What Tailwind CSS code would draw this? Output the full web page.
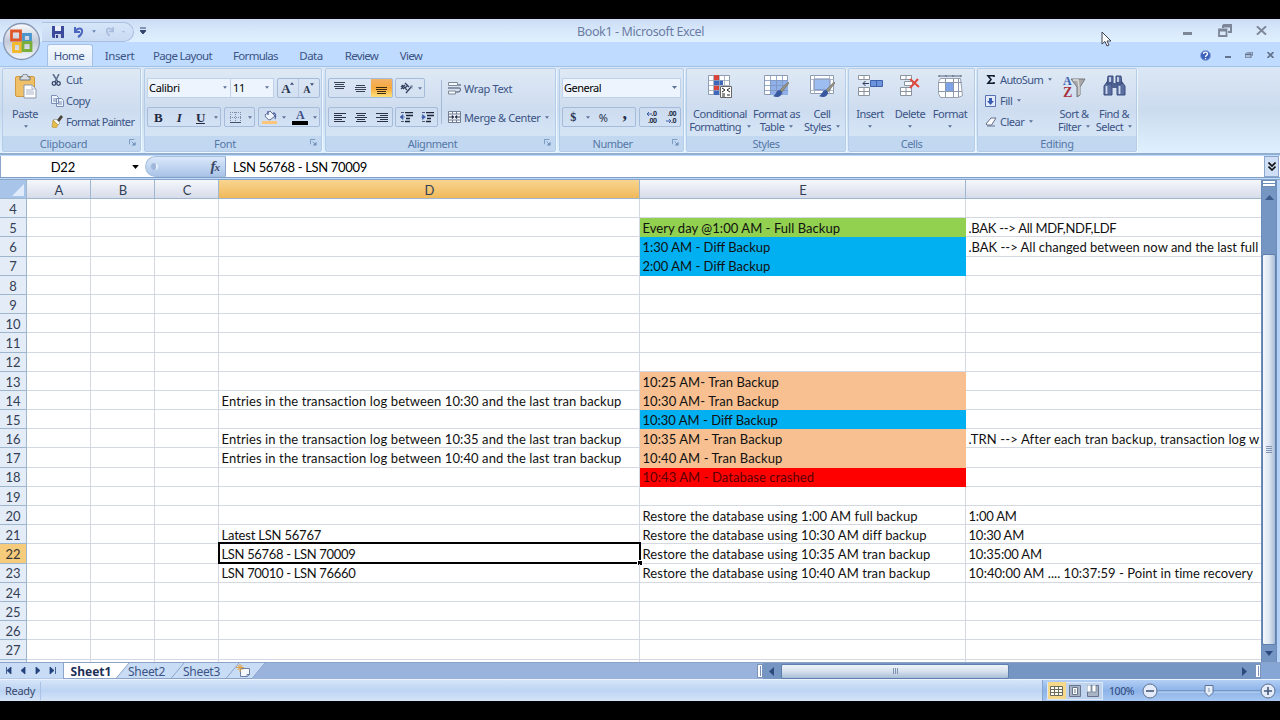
<!DOCTYPE html>
<html lang="en">
<head>
    <meta charset="UTF-8">
    <meta name="viewport" content="width=device-width, initial-scale=1.0">
    <title>Book1 - Microsoft Excel</title>
    <script src="https://cdn.jsdelivr.net/npm/@tailwindcss/browser@4"></script>
</head>
<body class="bg-black w-[1280px] h-[720px] overflow-hidden pt-[19px] font-['Noto_Sans',sans-serif] text-[11px] leading-none text-[#3b5485] whitespace-nowrap">
    <!-- shared glyphs -->
    <svg class="hidden">
        <symbol id="caret" viewBox="0 0 5 3"><path d="M0 0h5L2.5 3z" fill="currentColor"/></symbol>
        <symbol id="launcher" viewBox="0 0 8 8"><path d="M.5 6V.5H6M3 3l3 3" fill="none" stroke="#6d8fb8"/><path d="M7.5 3v4.500H3z" fill="#6d8fb8"/></symbol>
        <symbol id="brush" viewBox="0 0 17 17"><path d="M16 1 8 9l2 2 7-9z" fill="#9a9482" stroke="#6b6b62" stroke-width=".6"/><path d="M8 9c-4 0-3 4-7 6 4 2 9 1 9-4z" fill="#38589f"/></symbol>
    </svg>

    <div class="relative h-[682px] w-[1280px] bg-[#bfdbff] flex flex-col">
        <!-- title bar -->
        <div class="h-[23px] shrink-0 flex items-center bg-gradient-to-b from-[#cbdcf4] via-[#d8e8fb] to-[#dff0ff] relative">
            <div class="ml-[42px] w-[92px] h-[20px] rounded-r-full border border-[#a9c0e0] border-l-0 bg-gradient-to-b from-[#d6e5f8] to-[#c9dbf3] flex items-center pl-[10px] mt-0.5">
                <svg class="w-[12px] h-[12px]" viewBox="0 0 12 12"><path d="M0 0h12v12H1L0 11z" fill="#3c4a9c"/><path d="M3 0h6v5H3z" fill="#e9eefa"/><path d="M3 8h6v4H3z" fill="#c9d1ea"/><path d="M4 9h2v3H4z" fill="#343f86"/></svg>
                <svg class="w-[11px] h-[12px] ml-[9px]" viewBox="0 0 11 12"><path d="M2 1v5h5M2.500 5.500C5 1 10 2 9 6c-.4 2-2 4-4 5" fill="none" stroke="#4a66bd" stroke-width="2"/></svg>
                <svg class="w-[4px] h-[3px] ml-[8px] text-[#6a83b0]"><use href="#caret"/></svg>
                <svg class="w-[10px] h-[11px] ml-[9px]" viewBox="0 0 11 12"><path d="M9 1v5H4M8.500 5.500C6 1 1 2 2 6c.4 2 2 4 3 5" fill="none" stroke="#a9bcdc" stroke-width="1.800"/></svg>
                <svg class="w-[3px] h-[2px] ml-[7px] text-[#a9bcdc]"><use href="#caret"/></svg>
            </div>
            <svg class="w-[6px] h-[8px] ml-[6px] mt-px" viewBox="0 0 6 8"><path d="M0 1h6M0 3.500h6L3 7z" stroke="#32456e" stroke-width="1" fill="#32456e"/></svg>
            <span class="absolute left-[577px] top-[7px] text-[12.5px] tracking-[-0.38px] text-[#6b7ca3]">Book1 - Microsoft Excel</span>
            <div class="ml-auto flex items-center pr-[13px] text-[#7b8899]">
                <svg class="w-[10px] h-[4px] mr-[25px] mt-[7px]"><path d="M0 0h9v3H0z" fill="#7d8797"/></svg>
                <svg class="w-[14px] h-[13px] mr-[24px]" viewBox="0 0 14 13"><path d="M5 1h8v7h-3M5 2.500h8M5 1v3" fill="none" stroke="#7d8797" stroke-width="2"/><path d="M1 5.500h7.500V12H1zM1 6.500h7.500" fill="none" stroke="#7d8797" stroke-width="1.800"/></svg>
                <svg class="w-[11px] h-[9px]" viewBox="0 0 12 9"><path d="M1 0l10 9M11 0L1 9" stroke="#7d8797" stroke-width="2.200"/></svg>
            </div>
        </div>

        <!-- ribbon tabs -->
        <div class="h-[24px] shrink-0 flex items-end bg-[#bfdbff] text-[11.5px] tracking-[-0.7px] text-[#3b5485]">
            <div class="ml-[47px] w-[46px] h-[22px] rounded-t-[3px] border border-b-0 border-[#a3c0e8] bg-gradient-to-b from-[#f4f9ff] to-[#e0ebf8] flex items-center justify-center pr-0.5 tracking-[-0.6px]">Home</div>
            <div class="h-[22px] w-[53px] flex items-center justify-center pt-0.5 tracking-[-0.4px]">Insert</div>
            <div class="h-[22px] w-[73px] flex items-center justify-center pt-0.5">Page Layout</div>
            <div class="h-[22px] w-[73px] flex items-center justify-center pt-0.5">Formulas</div>
            <div class="h-[22px] w-[38px] flex items-center justify-center pt-0.5 tracking-[-0.5px]">Data</div>
            <div class="h-[22px] w-[63px] flex items-center justify-center pt-0.5">Review</div>
            <div class="h-[22px] w-[36px] flex items-center justify-center pt-0.5">View</div>
            <div class="ml-auto h-[22px] flex items-center pr-[6px]">
                <svg class="w-[11px] h-[11px] mr-[14px]" viewBox="0 0 11 11"><circle cx="5.500" cy="5.500" r="5" fill="#3d62bd" stroke="#8ba6de"/><path d="M3.500 4c0-2.500 4-2.500 4 0 0 1.300-2 1.500-2 3M5.500 8v1.200" fill="none" stroke="#fff" stroke-width="1.300"/></svg>
                <svg class="w-[6px] h-[2px] mr-[14px] mt-1"><path d="M0 0h6v2H0z" fill="#63738d"/></svg>
                <svg class="w-[8px] h-[6px] mr-[14px]" viewBox="0 0 8 6"><path d="M1.500 0H8v3H6.500M0 2h6v4H0zM0 2.500h6" fill="#a9bcd8" stroke="#63738d"/></svg>
                <svg class="w-[7px] h-[6px]" viewBox="0 0 7 6"><path d="M.5 0l6 6M6.500 0l-6 6" stroke="#63738d" stroke-width="1.600"/></svg>
            </div>
        </div>

        <!-- ribbon -->
        <div class="h-[89px] shrink-0 border-t border-[#9fc2e8] bg-gradient-to-b from-[#dbe7f5] via-[#cbdbee] to-[#dff1ff] border-b-2 border-b-[#93afd0] pt-px pl-[2px] flex gap-[3px] tracking-[-0.5px]">

            <!-- Clipboard -->
            <div class="w-[139px] h-[84px] border border-[#b3cce8] shadow-[1px_1px_0_#eef6ff] rounded-[2px] bg-gradient-to-b from-[#dfe9f5] via-[#cddcef] to-[#dbeafa] flex flex-col">
                <div class="h-[67px] flex">
                    <div class="w-[46px] flex flex-col items-center pt-[5px]">
                        <svg class="w-[22px] h-[25px]" viewBox="0 0 22 25"><rect x=".5" y="2.500" width="19" height="20" rx="1.500" fill="#efc066" stroke="#d29a3e"/><path d="M5 3h2c0-4 6-4 6 0h2v3H5z" fill="#d8dce3" stroke="#6f7683"/><path d="M9 11h8l4 4v9H9z" fill="#fff" stroke="#8d99ad"/><path d="M17 11v4h4M11 16h7M11 18h8M11 20h8" fill="none" stroke="#a9b4c7"/></svg>
                        <span class="mt-[9px] pr-0.5 tracking-[-0.5px]">Paste</span>
                        <svg class="w-[4px] h-[3px] mt-[6px] text-[#5b7096]"><use href="#caret"/></svg>
                    </div>
                    <div class="flex flex-col -ml-px">
                        <div class="h-[21px] flex items-center"><svg class="w-[16px] h-[12px]" viewBox="0 0 16 12"><path d="M5 0l5 8M11 0L7 8" stroke="#5c6c8a" stroke-width="1.500"/><circle cx="6" cy="9.500" r="1.800" fill="none" stroke="#344468" stroke-width="1.300"/><circle cx="10.500" cy="9.500" r="1.800" fill="none" stroke="#344468" stroke-width="1.300"/></svg><span class="ml-[2px]">Cut</span></div>
                        <div class="h-[21px] flex items-center"><svg class="w-[16px] h-[12px]" viewBox="0 0 16 12"><path d="M3.500.5h5l2 2v6h-7zM8.500 3.500h5l2 2v6h-7z" fill="#eef4fd" stroke="#7a8db5"/><path d="M5 4h3M5 6h3M10 7h4M10 9h4" stroke="#7a8db5"/></svg><span class="ml-[2px]">Copy</span></div>
                        <div class="h-[21px] flex items-center"><svg class="w-[16px] h-[13px]" viewBox="0 0 16 13"><path d="M9 5l4-5 2 2-4 5z" fill="#4a4438"/><path d="M5 5l3-1 4 4-2 2z" fill="#f5f5f5" stroke="#8d8d80" stroke-width=".7"/><path d="M5 5l5 5-2 3-4-1z" fill="#e5bd4c" stroke="#b98d2d" stroke-width=".6"/></svg><span class="ml-[2px] tracking-[-0.65px]">Format Painter</span></div>
                    </div>
                </div>
                <div class="h-[15px] bg-[#c2d8f0] text-[#5577a8] relative flex items-center justify-center pr-[16px] tracking-[-0.3px]">Clipboard<svg class="absolute right-[4px] top-[3px] w-[7px] h-[7px]"><use href="#launcher"/></svg></div>
            </div>

            <!-- Font -->
            <div class="w-[178px] h-[84px] border border-[#b3cce8] shadow-[1px_1px_0_#eef6ff] rounded-[2px] bg-gradient-to-b from-[#dfe9f5] via-[#cddcef] to-[#dbeafa] flex flex-col">
                <div class="h-[67px] pt-[9px] pl-[2px] flex flex-col gap-[9px]">
                    <div class="h-[20px] flex text-black tracking-[-0.3px]">
                        <div class="w-[84px] bg-[#edf4fd] border border-[#bfd2ea] flex items-center justify-between pl-[1px] pr-[3px] pb-0.5">Calibri<svg class="w-[4px] h-[3px] text-[#5b7096]"><use href="#caret"/></svg></div>
                        <div class="w-[43px] bg-[#edf4fd] border border-l-0 border-[#bfd2ea] flex items-center justify-between pl-[2px] pr-[4px] pb-0.5">11<svg class="w-[4px] h-[3px] text-[#5b7096]"><use href="#caret"/></svg></div>
                        <div class="ml-[3px] w-[43px] border border-[#a5bbda] rounded-[2px] flex font-['Liberation_Serif',serif] font-bold text-[#29344d]">
                            <div class="w-[21px] border-r border-[#b8cbe4] flex items-center justify-center text-[13px]">A<svg class="w-[4px] h-[3px] -mt-[9px]" viewBox="0 0 5 3"><path d="M0 3h5L2.500 0z" fill="#3c4c70"/></svg></div>
                            <div class="w-[21px] flex items-center justify-center text-[10px] pt-1">A<svg class="w-[4px] h-[3px] -mt-[12px] text-[#3c4c70]"><use href="#caret"/></svg></div>
                        </div>
                    </div>
                    <div class="h-[20px] flex text-[#1f2940]">
                        <div class="w-[74px] border border-[#a5bbda] rounded-[2px] flex items-center font-['Liberation_Serif',serif] font-bold text-[13px]">
                            <span class="w-[20px] text-center">B</span><span class="w-[22px] text-center italic">I</span><span class="w-[21px] text-center underline">U</span><svg class="w-[4px] h-[3px] ml-[3px] text-[#5b7096]"><use href="#caret"/></svg>
                        </div>
                        <div class="ml-[3px] w-[31px] border border-[#a5bbda] rounded-[2px] flex items-center pl-[5px]">
                            <svg class="w-[11px] h-[11px]" viewBox="0 0 11 11"><path d="M.5 0v10M5.500 0v10M10.500 0v10M0 .5h11M0 5.500h11" stroke="#8090ab" stroke-dasharray="1 1"/><path d="M0 10.500h11" stroke="#44506a"/></svg>
                            <svg class="w-[4px] h-[3px] ml-[7px] text-[#5b7096]"><use href="#caret"/></svg>
                        </div>
                        <div class="ml-[3px] w-[62px] border border-[#a5bbda] rounded-[2px] flex items-center pl-[3px]">
                            <svg class="w-[15px] h-[14px]" viewBox="0 0 15 14"><path d="M3 5l5-4 5 5-5 4c-2 0-5-3-5-5z" fill="#eef2fa" stroke="#5f7095"/><path d="M6 5V1M11 3c3 0 3 3 2 6" fill="none" stroke="#5065a0" stroke-width="1.300"/><path d="M0 11h15v3H0z" fill="#fbc57c"/></svg>
                            <svg class="w-[4px] h-[3px] ml-[5px] text-[#5b7096]"><use href="#caret"/></svg>
                            <div class="ml-[6px] w-[16px] border-b-4 border-black text-center font-['Liberation_Serif',serif] font-bold text-[12px] leading-[11px] text-[#3c4f86]">A</div>
                            <svg class="w-[4px] h-[3px] ml-[5px] text-[#5b7096]"><use href="#caret"/></svg>
                        </div>
                    </div>
                </div>
                <div class="h-[15px] bg-[#c2d8f0] text-[#5577a8] relative flex items-center justify-center pr-[16px] tracking-[-0.3px]">Font<svg class="absolute right-[4px] top-[3px] w-[7px] h-[7px]"><use href="#launcher"/></svg></div>
            </div>

            <!-- Alignment -->
            <div class="w-[231px] h-[84px] border border-[#b3cce8] shadow-[1px_1px_0_#eef6ff] rounded-[2px] bg-gradient-to-b from-[#dfe9f5] via-[#cddcef] to-[#dbeafa] flex flex-col">
                <div class="h-[67px] flex">
                    <div class="pt-[9px] pl-[2px] flex flex-col gap-[9px]">
                        <div class="h-[20px] flex">
                            <div class="w-[65px] border border-[#a5bbda] rounded-[2px] flex">
                                <div class="w-[21px] flex justify-center pt-[3px]"><svg class="w-[11px] h-[7px]"><path d="M0 .5h11M1 2.500h9M0 4.500h11M1 6.500h9" stroke="#3a4356"/></svg></div>
                                <div class="w-[21px] flex justify-center pt-[6px]"><svg class="w-[11px] h-[7px]"><path d="M1 .5h9M0 2.500h11M0 4.500h11M1 6.500h9" stroke="#3a4356"/></svg></div>
                                <div class="w-[21px] flex justify-center pt-[8px] bg-gradient-to-b from-[#f3b265] via-[#f7a93c] to-[#ffe078]"><svg class="w-[11px] h-[7px]"><path d="M0 .5h11M0 2.500h11M1 4.500h9M1 6.500h9" stroke="#3a2b10"/></svg></div>
                            </div>
                            <div class="ml-[2px] w-[30px] border border-[#a5bbda] rounded-[2px] flex items-center pl-[4px]">
                                <svg class="w-[13px] h-[12px]" viewBox="0 0 13 12"><path d="M1 7l4-4M2 3l5 5M5 1l4 4M1 4l3 3M5 6l3-3M6 11l6-7" fill="none" stroke="#34415e" stroke-width="1.300"/><path d="M12.500 3v4l-3-3z" fill="#8593ae"/></svg>
                                <svg class="w-[4px] h-[3px] ml-[5px] text-[#5b7096]"><use href="#caret"/></svg>
                            </div>
                        </div>
                        <div class="h-[20px] flex">
                            <div class="w-[65px] border border-[#a5bbda] rounded-[2px] flex items-center">
                                <div class="w-[21px] flex justify-center"><svg class="w-[12px] h-[9px]"><path d="M0 .5h12M0 2.500h8M0 4.500h12M0 6.500h8M0 8.500h11" stroke="#2a3347"/></svg></div>
                                <div class="w-[21px] flex justify-center"><svg class="w-[12px] h-[9px]"><path d="M1 .5h10M2 2.500h8M0 4.500h12M2 6.500h8M1 8.500h10" stroke="#2a3347"/></svg></div>
                                <div class="w-[21px] flex justify-center"><svg class="w-[12px] h-[9px]"><path d="M0 .5h12M4 2.500h8M0 4.500h12M4 6.500h8M1 8.500h11" stroke="#2a3347"/></svg></div>
                            </div>
                            <div class="ml-[2px] w-[43px] border border-[#a5bbda] rounded-[2px] flex items-center">
                                <div class="w-[21px] flex justify-center"><svg class="w-[13px] h-[11px]"><path d="M5 .5h8M6 3.500h7M6 6.500h4M5 9.500h5" stroke="#1c2538" stroke-width="1.300"/><path d="M1 .5h3M1 9.500h3" stroke="#4a5878"/><path d="M0 5l3-2.500v5zM3 5h2" fill="#3c5ba8" stroke="#3c5ba8" stroke-width=".6"/></svg></div>
                                <div class="w-[20px] flex justify-center"><svg class="w-[13px] h-[11px]"><path d="M5 .5h8M6 3.500h7M6 6.500h4M5 9.500h5" stroke="#1c2538" stroke-width="1.300"/><path d="M1 .5h3M1 9.500h3" stroke="#4a5878"/><path d="M4.500 5l-3-2.500v5zM0 5h2" fill="#3c5ba8" stroke="#3c5ba8" stroke-width=".6"/></svg></div>
                            </div>
                        </div>
                    </div>
                    <div class="mt-[11px] ml-[3px] h-[44px] w-px bg-[#a3b9d6]"></div>
                    <div class="flex flex-col pt-[9px] gap-[9px] pl-[6px]">
                        <div class="h-[20px] flex items-center"><svg class="w-[13px] h-[13px]" viewBox="0 0 13 13"><path d="M.5.500h9v3h-9zM.5 9h7v3h-7z" fill="#f6f9fd" stroke="#7f8998"/><path d="M0 6h11c2 0 2 4-1 4H8M10 3h3" fill="none" stroke="#707b8f" stroke-width="1.300"/></svg><span class="ml-[3px] tracking-[-0.35px]">Wrap Text</span></div>
                        <div class="h-[20px] flex items-center"><svg class="w-[13px] h-[12px]" viewBox="0 0 13 12"><path d="M.5.500h12v11H.5zM4.500 0v3M8.500 0v3M4.500 9v3M8.500 9v3M0 3h13M0 9h13" fill="#f6f9fd" stroke="#727e93"/><path d="M1 6h4M8 6h4M4 4.500 5.500 6 4 7.500M9 4.500 7.500 6 9 7.500" fill="none" stroke="#26324c" stroke-width="1.200"/></svg><span class="ml-[3px] tracking-[-0.4px]">Merge &amp; Center</span><svg class="w-[4px] h-[3px] ml-[5px] text-[#5b7096]"><use href="#caret"/></svg></div>
                    </div>
                </div>
                <div class="h-[15px] bg-[#c2d8f0] text-[#5577a8] relative flex items-center justify-center pr-[16px] tracking-[-0.45px]">Alignment<svg class="absolute right-[4px] top-[3px] w-[7px] h-[7px]"><use href="#launcher"/></svg></div>
            </div>

            <!-- Number -->
            <div class="w-[125px] h-[84px] border border-[#b3cce8] shadow-[1px_1px_0_#eef6ff] rounded-[2px] bg-gradient-to-b from-[#dfe9f5] via-[#cddcef] to-[#dbeafa] flex flex-col">
                <div class="h-[67px] pt-[9px] pl-[2px] flex flex-col gap-[9px]">
                    <div class="w-[119px] h-[20px] bg-[#edf4fd] border border-[#bfd2ea] flex items-center justify-between pl-[1px] pr-[3px] pb-0.5 text-black tracking-[-0.5px]">General<svg class="w-[5px] h-[3px] text-[#5b7096]"><use href="#caret"/></svg></div>
                    <div class="h-[20px] flex text-[#26324c]">
                        <div class="w-[74px] border border-[#a5bbda] rounded-[2px] flex items-center">
                            <span class="w-[20px] text-center font-['Liberation_Serif',serif] font-bold text-[12px]">$</span><svg class="w-[4px] h-[3px] ml-[3px] text-[#5b7096]"><use href="#caret"/></svg><span class="w-[26px] text-center text-[11px]">%</span><span class="w-[17px] text-center font-['Liberation_Serif',serif] font-bold text-[18px] -mt-[9px]">,</span>
                        </div>
                        <div class="ml-[3px] w-[42px] border border-[#a5bbda] rounded-[2px] flex items-center font-bold text-[7px] leading-[7px]">
                            <div class="w-[21px] flex flex-col items-end pr-[4px]"><div class="flex items-center"><svg class="w-[5px] h-[4px]" viewBox="0 0 5 4"><path d="M2 0 0 2l2 2M0 2h5" fill="none" stroke="#3c5ba8"/></svg>.0</div><div>.00</div></div>
                            <div class="w-[20px] flex flex-col items-end pr-[4px]"><div>.00</div><div class="flex items-center"><svg class="w-[5px] h-[4px]" viewBox="0 0 5 4"><path d="M3 0l2 2-2 2M0 2h5" fill="none" stroke="#3c5ba8"/></svg>.0</div></div>
                        </div>
                    </div>
                </div>
                <div class="h-[15px] bg-[#c2d8f0] text-[#5577a8] relative flex items-center justify-center pr-[18px] tracking-[-0.5px]">Number<svg class="absolute right-[4px] top-[3px] w-[7px] h-[7px]"><use href="#launcher"/></svg></div>
            </div>

            <!-- Styles -->
            <div class="w-[160px] h-[84px] -ml-px border border-[#b3cce8] shadow-[1px_1px_0_#eef6ff] rounded-[2px] bg-gradient-to-b from-[#dfe9f5] via-[#cddcef] to-[#dbeafa] flex flex-col">
                <div class="h-[67px] flex pt-[6px] pl-[3px]">
                    <div class="w-[60px] flex flex-col items-center">
                        <svg class="w-[24px] h-[24px]" viewBox="0 0 24 24"><path d="M.5.500h21v19H.5z" fill="#fff" stroke="#8e9bb3"/><path d="M6 0h5v5H6zM6 10h5v5H6z" fill="#d9433c"/><path d="M6 5h9v5H6zM6 15h5v5H6z" fill="#3f66bd"/><path d="M0 5.500h22M0 10.500h22M0 15.500h22M5.500 0v20M11.500 0v20M16.500 0v20" stroke="#97a3b8" stroke-width=".8"/><path d="M12.500 11.500h11v11h-11z" fill="#fff" stroke="#666"/><path d="M14 13l3 2-3 2M22 13l-3 2 3 2M14 19h3M14 21h3M19 20h3" fill="none" stroke="#222"/></svg>
                        <span class="mt-[9px]">Conditional</span>
                        <span class="mt-[2px] flex items-center tracking-[-0.6px]">Formatting<svg class="w-[4px] h-[3px] ml-[6px] text-[#5b7096]"><use href="#caret"/></svg></span>
                    </div>
                    <div class="w-[53px] flex flex-col items-center">
                        <svg class="w-[25px] h-[24px]" viewBox="0 0 25 24"><path d="M.5.500h23v19H.5z" fill="#fff" stroke="#8e9bb3"/><path d="M6 5h18v15H6z" fill="#8fb0e8"/><path d="M0 5.500h24M0 10.500h24M0 15.500h24M6.500 0v20M12.500 0v20M18.500 0v20" stroke="#7f94bd" stroke-width=".8"/><use href="#brush" x="8" y="6" width="17" height="17"/></svg>
                        <span class="mt-[9px]">Format as</span>
                        <span class="mt-[2px] flex items-center">Table<svg class="w-[4px] h-[3px] ml-[5px] text-[#5b7096]"><use href="#caret"/></svg></span>
                    </div>
                    <div class="w-[38px] flex flex-col items-center">
                        <svg class="w-[25px] h-[24px]" viewBox="0 0 25 24"><path d="M.5.500h23v18H.5z" fill="#fff" stroke="#8e9bb3"/><path d="M4 4h16v11H4z" fill="#9dbcf0" stroke="#6783b8"/><path d="M4.500 0v19M19.500 0v19M0 4.500h24M0 15.500h24" stroke="#9aa7bd" stroke-width=".8"/><use href="#brush" x="8" y="6" width="17" height="17"/></svg>
                        <span class="mt-[9px]">Cell</span>
                        <span class="mt-[2px] flex items-center">Styles<svg class="w-[4px] h-[3px] ml-[5px] text-[#5b7096]"><use href="#caret"/></svg></span>
                    </div>
                </div>
                <div class="h-[15px] bg-[#c2d8f0] text-[#5577a8] flex items-center justify-center tracking-[-0.5px]">Styles</div>
            </div>

            <!-- Cells -->
            <div class="w-[127px] h-[84px] -ml-px border border-[#b3cce8] shadow-[1px_1px_0_#eef6ff] rounded-[2px] bg-gradient-to-b from-[#dfe9f5] via-[#cddcef] to-[#dbeafa] flex flex-col">
                <div class="h-[67px] flex pt-[6px] pl-[1px] tracking-[-0.5px]">
                    <div class="w-[40px] flex flex-col items-center">
                        <svg class="w-[25px] h-[22px]" viewBox="0 0 25 22"><path d="M.5.500h11v4H.5zM.5 12.500h11v8H.5zM6 0v5M6 12v9M0 16.500h12" fill="#fff" stroke="#8b939f"/><path d="M12.500 5.500h12v6h-12zM18.500 5v7" fill="#6d93dd" stroke="#3e62ab"/><path d="M5 8.500h6M7.500 6 5 8.500 7.500 11" fill="none" stroke="#2d3c5a"/></svg>
                        <span class="mt-[11px]">Insert</span>
                        <svg class="w-[4px] h-[3px] mt-[6px] text-[#5b7096]"><use href="#caret"/></svg>
                    </div>
                    <div class="w-[40px] flex flex-col items-center">
                        <svg class="w-[20px] h-[22px]" viewBox="0 0 20 22"><path d="M.5.500h11v4H.5zM.5 12.500h11v8H.5zM6 0v5M6 12v9M0 16.500h12M4.500 6.500h8v4h-8z" fill="#fff" stroke="#8b939f"/><path d="M10 4l9 8M18 4l-8 9" stroke="#e0483e" stroke-width="2"/></svg>
                        <span class="mt-[11px]">Delete</span>
                        <svg class="w-[4px] h-[3px] mt-[6px] text-[#5b7096]"><use href="#caret"/></svg>
                    </div>
                    <div class="w-[40px] flex flex-col items-center">
                        <svg class="w-[25px] h-[23px]" viewBox="0 0 25 23"><path d="M2.500 3.500h20l2 17-4 2H2.500l-2-4v-12z" fill="#fff" stroke="#97a0ae"/><path d="M7 7h8v10H7z" fill="#7ea3e6"/><path d="M1 7.500h23M1 16.500h23M7.500 3v19M15.500 3v19M20.500 3v19" stroke="#8b97ab"/><path d="M1 1h22M1 0v2M8 0v2M15 0v2M23 0v2" stroke="#59657c"/></svg>
                        <span class="mt-[10px]">Format</span>
                        <svg class="w-[4px] h-[3px] mt-[6px] text-[#5b7096]"><use href="#caret"/></svg>
                    </div>
                </div>
                <div class="h-[15px] bg-[#c2d8f0] text-[#5577a8] flex items-center justify-center tracking-[-0.5px]">Cells</div>
            </div>

            <!-- Editing -->
            <div class="w-[160px] h-[84px] -ml-px border border-[#b3cce8] shadow-[1px_1px_0_#eef6ff] rounded-[2px] bg-gradient-to-b from-[#dfe9f5] via-[#cddcef] to-[#dbeafa] flex flex-col">
                <div class="h-[67px] flex">
                    <div class="w-[76px] flex flex-col pl-[7px]">
                        <div class="h-[21px] flex items-center"><svg class="w-[12px] h-[9px]" viewBox="0 0 12 9"><path d="M9 2V.8H3L6 4.500 3 8.200h6V7" fill="none" stroke="#111a2e" stroke-width="1.600"/></svg><span class="ml-[3px] tracking-[-0.65px]">AutoSum</span><svg class="w-[4px] h-[3px] ml-[5px] text-[#5b7096]"><use href="#caret"/></svg></div>
                        <div class="h-[21px] flex items-center"><svg class="w-[11px] h-[12px]" viewBox="0 0 11 12"><path d="M.5.500h10v11H.5z" fill="#e3ebfa" stroke="#5771b3"/><path d="M4 3h3v3h2L5.500 10 2 6h2z" fill="#3a5bb5"/></svg><span class="ml-[4px]">Fill</span><svg class="w-[4px] h-[3px] ml-[5px] text-[#5b7096]"><use href="#caret"/></svg></div>
                        <div class="h-[21px] flex items-center"><svg class="w-[12px] h-[10px]" viewBox="0 0 12 10"><path d="M1 7l5-6h5L6.500 8H2z" fill="#fdfdfe" stroke="#62708c"/><path d="M2 9h8" stroke="#62708c"/></svg><span class="ml-[3px]">Clear</span><svg class="w-[4px] h-[3px] ml-[5px] text-[#5b7096]"><use href="#caret"/></svg></div>
                    </div>
                    <div class="w-[40px] flex flex-col items-center pt-[6px]">
                        <svg class="w-[24px] h-[24px]" viewBox="0 0 24 24"><path d="M9 4h14l-5 8v8l-3 2V12z" fill="#a9a9ab" stroke="#77787c"/><path d="M11 5h5l1 7v8" fill="none" stroke="#ddd" stroke-width="1.300"/><text x="1" y="10" font-family="Liberation Serif" font-weight="bold" font-size="12" fill="#3a62ad">A</text><text x="1" y="22" font-family="Liberation Serif" font-weight="bold" font-size="14" fill="#a83440">Z</text></svg>
                        <span class="mt-[9px]">Sort &amp;</span>
                        <span class="mt-[2px] flex items-center">Filter<svg class="w-[4px] h-[3px] ml-[5px] text-[#5b7096]"><use href="#caret"/></svg></span>
                    </div>
                    <div class="w-[40px] flex flex-col items-center pt-[6px]">
                        <svg class="w-[23px] h-[22px]" viewBox="0 0 23 22"><path d="M5 1h5v8H4zM13 1h5l1 8h-6zM1 11l3-4h5v13H1zM14 7h5l3 4v9h-8z" fill="#5a6fa0" stroke="#3b4d7d"/><path d="M9 8h5v5H9z" fill="#4d6090"/><path d="M3.500 11v8M16.500 11v8M7 2v5M15 2v5" stroke="#ced9f0" stroke-width="1.800"/></svg>
                        <span class="mt-[11px]">Find &amp;</span>
                        <span class="mt-[2px] flex items-center">Select<svg class="w-[4px] h-[3px] ml-[5px] text-[#5b7096]"><use href="#caret"/></svg></span>
                    </div>
                </div>
                <div class="h-[15px] bg-[#c2d8f0] text-[#5577a8] flex items-center justify-center tracking-[-0.4px]">Editing</div>
            </div>
        </div>

        <!-- formula bar -->
        <div class="h-[22px] mt-px shrink-0 flex bg-white border-b border-[#7f9fc6] font-[Lato,sans-serif] text-[13px] text-black">
            <div class="w-[145px] flex items-center justify-end pr-[6px] pt-px border-l border-[#8ba7cc]">
                <span class="mr-[57px] tracking-[-0.2px]">D22</span>
                <svg class="w-[7px] h-[4px]"><use href="#caret"/></svg>
            </div>
            <div class="w-[81px] rounded-l-full border border-r-[#8ba7cc] border-[#a7bfdf] bg-gradient-to-b from-[#dae8fa] to-[#aac4e8] flex items-center justify-between pl-[5px] pr-[4px]">
                <span class="w-[7px] h-[7px] rounded-full bg-[#9eb7da] border-r-2 border-[#e6f0fc]"></span>
                <span class="font-['Liberation_Serif',serif] italic font-bold text-[15px] text-[#3a4867] tracking-[-1px] pr-[2px]">f<span class="text-[11px]">x</span></span>
            </div>
            <div class="flex-1 flex items-center pl-[7px] pt-0.5"><span class="tracking-[-0.33px]">LSN 56768 - LSN 70009</span></div>
            <div class="w-[15px] mr-px border border-[#8ba7cc] bg-[#cfe0f6] flex items-center justify-center">
                <svg class="w-[8px] h-[9px]" viewBox="0 0 8 9"><path d="M.5.500 4 4 7.500.500M.5 4.500 4 8l3.500-3.500" fill="none" stroke="#111" stroke-width="1.600"/></svg>
            </div>
        </div>

        <!-- sheet -->
        <div class="h-[484px] shrink-0 flex mt-px border-t border-[#86a3c9]">
            <div class="w-[1261px] h-[484px] overflow-hidden bg-white font-[Lato,sans-serif] text-[13px]">
                <div class="h-[19px] flex bg-gradient-to-b from-[#f5f7fb] to-[#d7dcea] border-b border-[#9eb6ce] text-[#333f55] text-[13px] *:border-r *:border-[#9eb6ce] *:flex *:items-center *:justify-center *:shrink-0 *:pt-0.5 *:pl-px">
                    <div class="w-[27px] bg-[#a9c4e9]"><svg class="w-[12px] h-[12px] ml-[9px]"><path d="M12 0v12H0z" fill="#dfeafa"/></svg></div>
                    <div class="w-[64px]">A</div>
                    <div class="w-[64px]">B</div>
                    <div class="w-[64px]">C</div>
                    <div class="w-[421px] bg-gradient-to-b from-[#f8d48f] to-[#f0b95a]">D</div>
                    <div class="w-[326px]">E</div>
                    <div class="w-[300px]"></div>
                </div>
                <div id="rows"></div>
            </div>
            <!-- vertical scrollbar -->
            <div class="w-[16px] flex flex-col bg-[#7595c2] border-x border-[#6c8cba]">
                <div class="h-[7px] bg-white border border-[#6c8cba] flex items-center"><span class="w-full h-px bg-[#6c8cba]"></span></div>
                <div class="h-[67px] flex justify-center pt-[8px]"><svg class="w-[9px] h-[5px]" viewBox="0 0 9 5"><path d="M0 5h9L4.500 0z" fill="#3c5a8c"/></svg></div>
                <div class="h-[392px] rounded-[2px] border border-[#5f7fae] bg-gradient-to-r from-[#f3f6fb] via-[#dfe7f2] to-[#a9bdd9] flex flex-col items-center justify-center gap-px">
                    <span class="w-[6px] h-px bg-[#7f93b3]"></span><span class="w-[6px] h-px bg-[#7f93b3]"></span><span class="w-[6px] h-px bg-[#7f93b3]"></span><span class="w-[6px] h-px bg-[#7f93b3]"></span>
                </div>
                <div class="h-[18px] flex justify-center pt-[6px]"><svg class="w-[8px] h-[5px] text-[#2d4a7e]" viewBox="0 0 8 5"><path d="M0 0h8L4 5z" fill="currentColor"/></svg></div>
            </div>
            <div class="w-[3px] bg-[#b4d0f5]"></div>
        </div>

        <!-- sheet tabs and horizontal scrollbar -->
        <div class="relative -mt-px h-[17px] shrink-0 flex items-center bg-[#9ab3dc] border-t border-[#8ba3c7]">
            <svg class="absolute left-0 top-0 w-[270px] h-[16px]" viewBox="0 0 270 16">
                <path d="M0 0h265l-13 15.500H0z" fill="#c9dcf6"/>
                <path d="M63 0h66l-13 15.500H63z" fill="#fff"/>
                <path d="M63.500 0v16M129 0l-13 15.500M184 0l-13 15.500M239 0l-13 15.500M265 0l-13 15.500H64" fill="none" stroke="#8aa3cb"/>
                <path d="M6.500 4v7M11 4v7L7 7.500zM25 4v7l-4-3.500zM36 4v7l4-3.500zM50 4v7l4-3.500zM55.500 4v7" fill="#24437c" stroke="#24437c" stroke-width=".8"/>
                <path d="M240.500 5.500h9v6l-2 2h-7z" fill="#f5f8fc" stroke="#6e81a5"/><path d="M247 13.500v-2h3" fill="none" stroke="#6e81a5"/>
                <path d="M240 1v8M236 4.500h8M237.500 2l5 5M242.500 2l-5 5" stroke="#e2a13e"/>
            </svg>
            <div class="relative flex pl-[63px] pt-px text-[12px] tracking-[-0.3px] w-[757px]">
                <span class="w-[56px] text-center font-bold text-[#1e2f58] tracking-[0px]">Sheet1</span>
                <span class="w-[55px] text-center">Sheet2</span>
                <span class="w-[55px] text-center">Sheet3</span>
            </div>
            <div class="w-[6px] h-[14px] bg-white border border-[#7b93bb] flex justify-center"><span class="w-px h-[10px] mt-px bg-[#7b93bb]"></span></div>
            <div class="w-[498px] h-[16px] bg-[#7595c2] flex items-center">
                <svg class="w-[5px] h-[9px] ml-[6px]"><path d="M5 0v9L0 4.500z" fill="#2d4a7e"/></svg>
                <div class="ml-[7px] w-[228px] h-[15px] rounded-[2px] border border-[#5f7fae] bg-gradient-to-b from-[#eff4fa] via-[#d6e0ed] to-[#a9bdd6] flex items-center justify-center gap-px">
                    <span class="w-px h-[6px] bg-[#7f93b3]"></span><span class="w-px h-[6px] bg-[#7f93b3]"></span><span class="w-px h-[6px] bg-[#7f93b3]"></span>
                </div>
                <svg class="w-[5px] h-[9px] ml-auto mr-[8px]"><path d="M0 0v9l5-4.500z" fill="#2d4a7e"/></svg>
                <div class="w-[6px] h-[14px] bg-white border border-[#7b93bb] flex justify-center"><span class="w-px h-[10px] mt-px bg-[#7b93bb]"></span></div>
            </div>
            <div class="flex-1 h-[16px] bg-[#86a6d6]"></div>
        </div>

        <!-- status bar -->
        <div class="flex-1 flex items-center border-t border-[#eaf3ff] bg-gradient-to-b from-[#d5e4f8] via-[#bdd4f4] to-[#d5e4f7]">
            <span class="w-[41px] pl-[5px] h-[18px] flex items-center border-r border-[#aac3e4] text-[#38486c] tracking-[-0.3px]">Ready</span>
            <div class="ml-auto w-[238px] h-full bg-gradient-to-b from-[#b3cff5] via-[#8db3e8] to-[#a7c7f2] border-l border-[#86a5d0] flex items-center">
                <div class="ml-[4px] w-[56px] h-[18px] border border-[#dbe8fa] bg-[#bfd3ee] flex items-center">
                    <div class="w-[18px] h-[17px] bg-[#f7d98c] flex items-center justify-center"><svg class="w-[13px] h-[10px]"><path d="M.5.500h12v9H.5zM0 3.500h13M0 6.500h13M4.500 0v10M8.500 0v10" fill="#fffdf3" stroke="#6b6b5c"/></svg></div>
                    <div class="w-[18px] flex items-center justify-center"><svg class="w-[12px] h-[12px]"><path d="M.5.500h11v11H.5z" fill="#a9b4c4" stroke="#66758c"/><path d="M3.500 2.500h5v7h-5zM5 5h2M5 7h2" fill="#fff" stroke="#66758c"/></svg></div>
                    <div class="w-[19px] flex items-center justify-center"><svg class="w-[12px] h-[12px]"><path d="M.5.500h11v11H.5z" fill="#a9b4c4" stroke="#66758c"/><path d="M0 0h4v7H0zM5 0h4v7H5z" fill="#fff" stroke="#66758c" stroke-width=".7"/></svg></div>
                </div>
                <span class="ml-[6px] w-[26px] pt-px text-[10.5px] tracking-[-0.4px] text-[#2e4678]">100%</span>
                <svg class="w-[137px] h-[18px] ml-[5px]" viewBox="0 0 137 18">
                    <path d="M18 9h102" stroke="#587db3"/><path d="M18 10h102" stroke="#c9def8"/><path d="M69 6v7" stroke="#587db3"/>
                    <path d="M65 3.500h8v7l-4 4-4-4z" fill="#e6eefa" stroke="#5d7395"/><path d="M69 6v4" stroke="#8294b0"/>
                    <circle cx="10" cy="9" r="7" fill="#e3ecf8" stroke="#5d6f90"/><path d="M6 9h8" stroke="#46587a" stroke-width="1.600"/>
                    <circle cx="128" cy="9" r="7" fill="#e3ecf8" stroke="#5d6f90"/><path d="M124 9h8M128 5v8" stroke="#46587a" stroke-width="1.600"/>
                </svg>
            </div>
        </div>

        <!-- office button -->
        <svg class="absolute left-[2px] top-[3px] w-[39px] h-[39px]" viewBox="0 0 39 39">
            <defs><linearGradient id="orb" x2="0" y2="1"><stop stop-color="#fbfcfe"/><stop offset=".5" stop-color="#c3cad9"/><stop offset="1" stop-color="#f4f7fc"/></linearGradient></defs>
            <circle cx="19.500" cy="19.500" r="18" fill="url(#orb)" stroke="#8798b5" stroke-width="1.300"/>
            <g fill="none" stroke-width="2.800"><path d="M9.500 9h9v9h-9z" stroke="#e0582a"/><path d="M21.500 12.500h7v7h-7z" stroke="#4a95cc"/><path d="M11.500 21.500h7v8h-7z" stroke="#f1b92f"/><path d="M21 20.500h8v8h-8z" stroke="#79ae3b"/></g>
        </svg>

        <!-- mouse pointer -->
        <svg class="absolute left-[1101px] top-[12px] w-[11px] h-[16px]" viewBox="0 0 11 16"><path d="M1 1v12l3-2.500L6 15l2-1-2-4h4z" fill="#fff" stroke="#3a4050"/></svg>
    </div>

    <script>
        const green = "bg-[#92d050]", blue = "bg-[#00b0f0]", peach = "bg-[#f8c090]", red = "bg-[#ff0000]";
        // letter spacing for long sentences, short labels and mostly-digit cells
        const loose = "tracking-[0.1px]", wide = "tracking-[0.07px]", plain = "tracking-[0px]", tight = "tracking-[-0.33px]", snug = "tracking-[-0.2px]";
        // row number -> [D text, E text, F text, E fill, D spacing, E spacing, F spacing]
        const data = {
            5: ["", "Every day @1:00 AM - Full Backup", ".BAK --> All MDF,NDF,LDF", green, "", "tracking-[0.05px]", "tracking-[-0.27px]"],
            6: ["", "1:30 AM - Diff Backup", ".BAK --> All changed between now and the last full", blue, "", plain, "tracking-[-0.01px]"],
            7: ["", "2:00 AM - Diff Backup", "", blue, "", plain, ""],
            13: ["", "10:25 AM- Tran Backup", "", peach, "", wide, ""],
            14: ["Entries in the transaction log between 10:30 and the last tran backup", "10:30 AM- Tran Backup", "", peach, loose, wide, ""],
            15: ["", "10:30 AM - Diff Backup", "", blue, "", plain, ""],
            16: ["Entries in the transaction log between 10:35 and the last tran backup", "10:35 AM - Tran Backup", ".TRN --> After each tran backup, transaction log w", peach, loose, wide, "tracking-[0.12px]"],
            17: ["Entries in the transaction log between 10:40 and the last tran backup", "10:40 AM - Tran Backup", "", peach, loose, wide, ""],
            18: ["", "10:43 AM - Database crashed", "", red, "", wide, ""],
            20: ["", "Restore the database using 1:00 AM full backup", "1:00 AM", "", "", wide, snug],
            21: ["Latest LSN 56767", "Restore the database using 10:30 AM diff backup", "10:30 AM", "", snug, wide, snug],
            22: ["LSN 56768 - LSN 70009", "Restore the database using 10:35 AM tran backup", "10:35:00 AM", "", tight, wide, snug],
            23: ["LSN 70010 - LSN 76660", "Restore the database using 10:40 AM tran backup", "10:40:00 AM .... 10:37:59 - Point in time recovery", "", tight, wide, "tracking-[0.04px]"]
        };
        const cell = "shrink-0 border-b border-[#d3d8e2] flex items-center overflow-hidden pl-[2.5px] pt-[2.5px] ";
        let html = "";
        for (let n = 4; n <= 28; n++) {
            const [d, e, f, fill, ds, es, fs] = data[n] || ["", "", "", "", "", "", ""];
            const active = n === 22;
            html += `<div class="relative flex h-[19.2px] text-[#111]">
                <div class="w-[27px] shrink-0 border-r border-b border-[#9eb6ce] flex items-center justify-center pt-[2.5px] ${active ? "bg-[#f7cb7c] text-[#333]" : "bg-[#e4ecf7] text-[#333f55]"}">${n < 28 ? n : ""}</div>
                <div class="${cell} border-r w-[64px]"></div><div class="${cell} border-r w-[64px]"></div><div class="${cell} border-r w-[64px]"></div>
                <div class="${cell} border-r w-[421px] ${ds}">${d}</div>
                <div class="${cell} border-r w-[326px] ${es} ${fill} ${fill ? "border-transparent" : ""} ${n === 18 ? "text-[#5a0000]" : ""}">${e}</div>
                <div class="${cell} w-[295px] ${fs}">${f}</div>
                ${active ? '<div class="absolute left-[218px] -top-[2px] w-[423px] h-[22px] border-2 border-black"></div><div class="absolute left-[638px] top-[17px] w-[4px] h-[4px] bg-black outline outline-white"></div>' : ""}
            </div>`;
        }
        document.getElementById("rows").innerHTML = html;
    </script>
</body>
</html>
